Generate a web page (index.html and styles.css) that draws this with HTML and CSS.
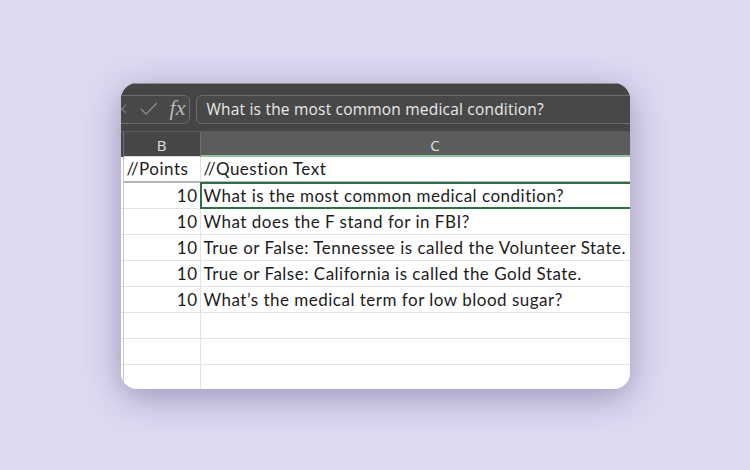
FILE: index.html
```html
<!DOCTYPE html>
<html lang="en">
<head>
    <meta charset="UTF-8">
    <title>Questions sheet</title>
    <link rel="stylesheet" href="styles.css">
</head>
<body>
    <div class="card">
        <div class="toolbar">
            <div class="func-box">
                <svg class="icon-x" width="10" height="10" viewBox="0 0 10 10">
                    <path d="M1 1 L9 9 M9 1 L1 9" fill="none" stroke="#7a7a7a" stroke-width="1.2"/>
                </svg>
                <svg class="icon-check" width="18" height="14" viewBox="0 0 18 14">
                    <path d="M1 7 L6 12 L17 1" fill="none" stroke="#8c8c8c" stroke-width="1.3"/>
                </svg>
                <span class="icon-fx">fx</span>
            </div>
            <div class="formula">What is the most common medical condition?</div>
        </div>

        <div class="sheet">
            <div class="hd corner"></div>
            <div class="hd col-b">B</div>
            <div class="hd col-c">C</div>

            <div class="rn"></div>
            <div class="cell b frozen">//Points</div>
            <div class="cell frozen">//Question Text</div>

            <div class="rn"></div>
            <div class="cell num">10</div>
            <div class="cell active">What is the most common medical condition?</div>

            <div class="rn"></div>
            <div class="cell num">10</div>
            <div class="cell">What does the F stand for in FBI?</div>

            <div class="rn"></div>
            <div class="cell num">10</div>
            <div class="cell">True or False: Tennessee is called the Volunteer State.</div>

            <div class="rn"></div>
            <div class="cell num">10</div>
            <div class="cell">True or False: California is called the Gold State.</div>

            <div class="rn"></div>
            <div class="cell num">10</div>
            <div class="cell">What’s the medical term for low blood sugar?</div>

            <div class="rn"></div>
            <div class="cell num"></div>
            <div class="cell"></div>

            <div class="rn"></div>
            <div class="cell num"></div>
            <div class="cell"></div>

            <div class="rn"></div>
            <div class="cell num"></div>
            <div class="cell"></div>
        </div>
    </div>
</body>
</html>
```

FILE: styles.css
```css
body {
    margin: 0;
    height: 470px;
    display: flex;
    justify-content: center;
    align-items: center;
    background-color: #dfdaf2;
    overflow: hidden;
    font-family: 'Open Sans', sans-serif;
}

.card {
    width: 509px;
    height: 306px;
    margin-top: 1px;
    border-radius: 16px;
    overflow: hidden;
    background: #fff;
    box-shadow: 0 8px 36px rgba(70, 60, 110, 0.45);
}

/* formula bar */
.toolbar {
    height: 48px;
    box-sizing: border-box;
    padding: 11px 0 7px 0;
    background: #454545;
    border-top: 1px solid #8e8e8e;
    display: flex;
    gap: 6px;
}

.func-box {
    width: 90px;
    margin-left: -21px;
    flex-shrink: 0;
    box-sizing: border-box;
    border: 1px solid #6c6c6c;
    border-radius: 6px;
    background: #484848;
    display: flex;
    align-items: center;
    justify-content: flex-end;
    gap: 12px;
    padding-right: 3px;
}

.icon-x {
    margin-right: 1px;
}

.icon-fx {
    font-family: 'Liberation Serif', serif;
    font-style: italic;
    font-size: 22px;
    color: #b8b8b8;
    line-height: 1;
    margin-top: -3px;
}

.formula {
    flex: 1;
    margin-right: -20px;
    box-sizing: border-box;
    border: 1px solid #6c6c6c;
    border-radius: 6px;
    background: #484848;
    color: #eaeaea;
    font-size: 15.5px;
    letter-spacing: 0.2px;
    padding-left: 10px;
    display: flex;
    align-items: center;
}

/* grid */
.sheet {
    display: grid;
    grid-template-columns: 3px 77px 470px;
    grid-auto-rows: 26px;
    font-family: 'Lato', 'Liberation Sans', sans-serif;
    font-size: 17px;
    letter-spacing: 0.5px;
    color: #1c1c1c;
}

.hd {
    background: #474747;
    color: #e2e2e2;
    font-family: 'Open Sans', sans-serif;
    font-size: 15px;
    letter-spacing: 0;
    display: flex;
    align-items: center;
    justify-content: center;
    padding-top: 3px;
    border-right: 1px solid #707070;
    border-top: 1px solid #5a5a5a;
    box-sizing: border-box;
}

.hd.col-b {
    border-bottom: 1px solid #d8d8d8;
}

.hd.col-c {
    background: #5c5c5c;
    border-bottom: 2px solid #8cc79b;
}

.rn {
    background: #fff;
    border-right: 1px solid #c9c9c9;
    border-bottom: 1px solid #e2e2e2;
}

.cell {
    box-sizing: border-box;
    border-right: 1px solid #e2e2e2;
    border-bottom: 1px solid #e2e2e2;
    padding: 0 3px;
    display: flex;
    align-items: center;
    white-space: nowrap;
}

.cell.num {
    justify-content: flex-end;
    padding-right: 2px;
}

.cell.frozen {
    border-bottom: 2px solid #b4b4b4;
}

.cell.active {
    border: 2px solid #2f6e44;
    margin: -1px 0 0 -1px;
    padding-left: 2px;
}
```
